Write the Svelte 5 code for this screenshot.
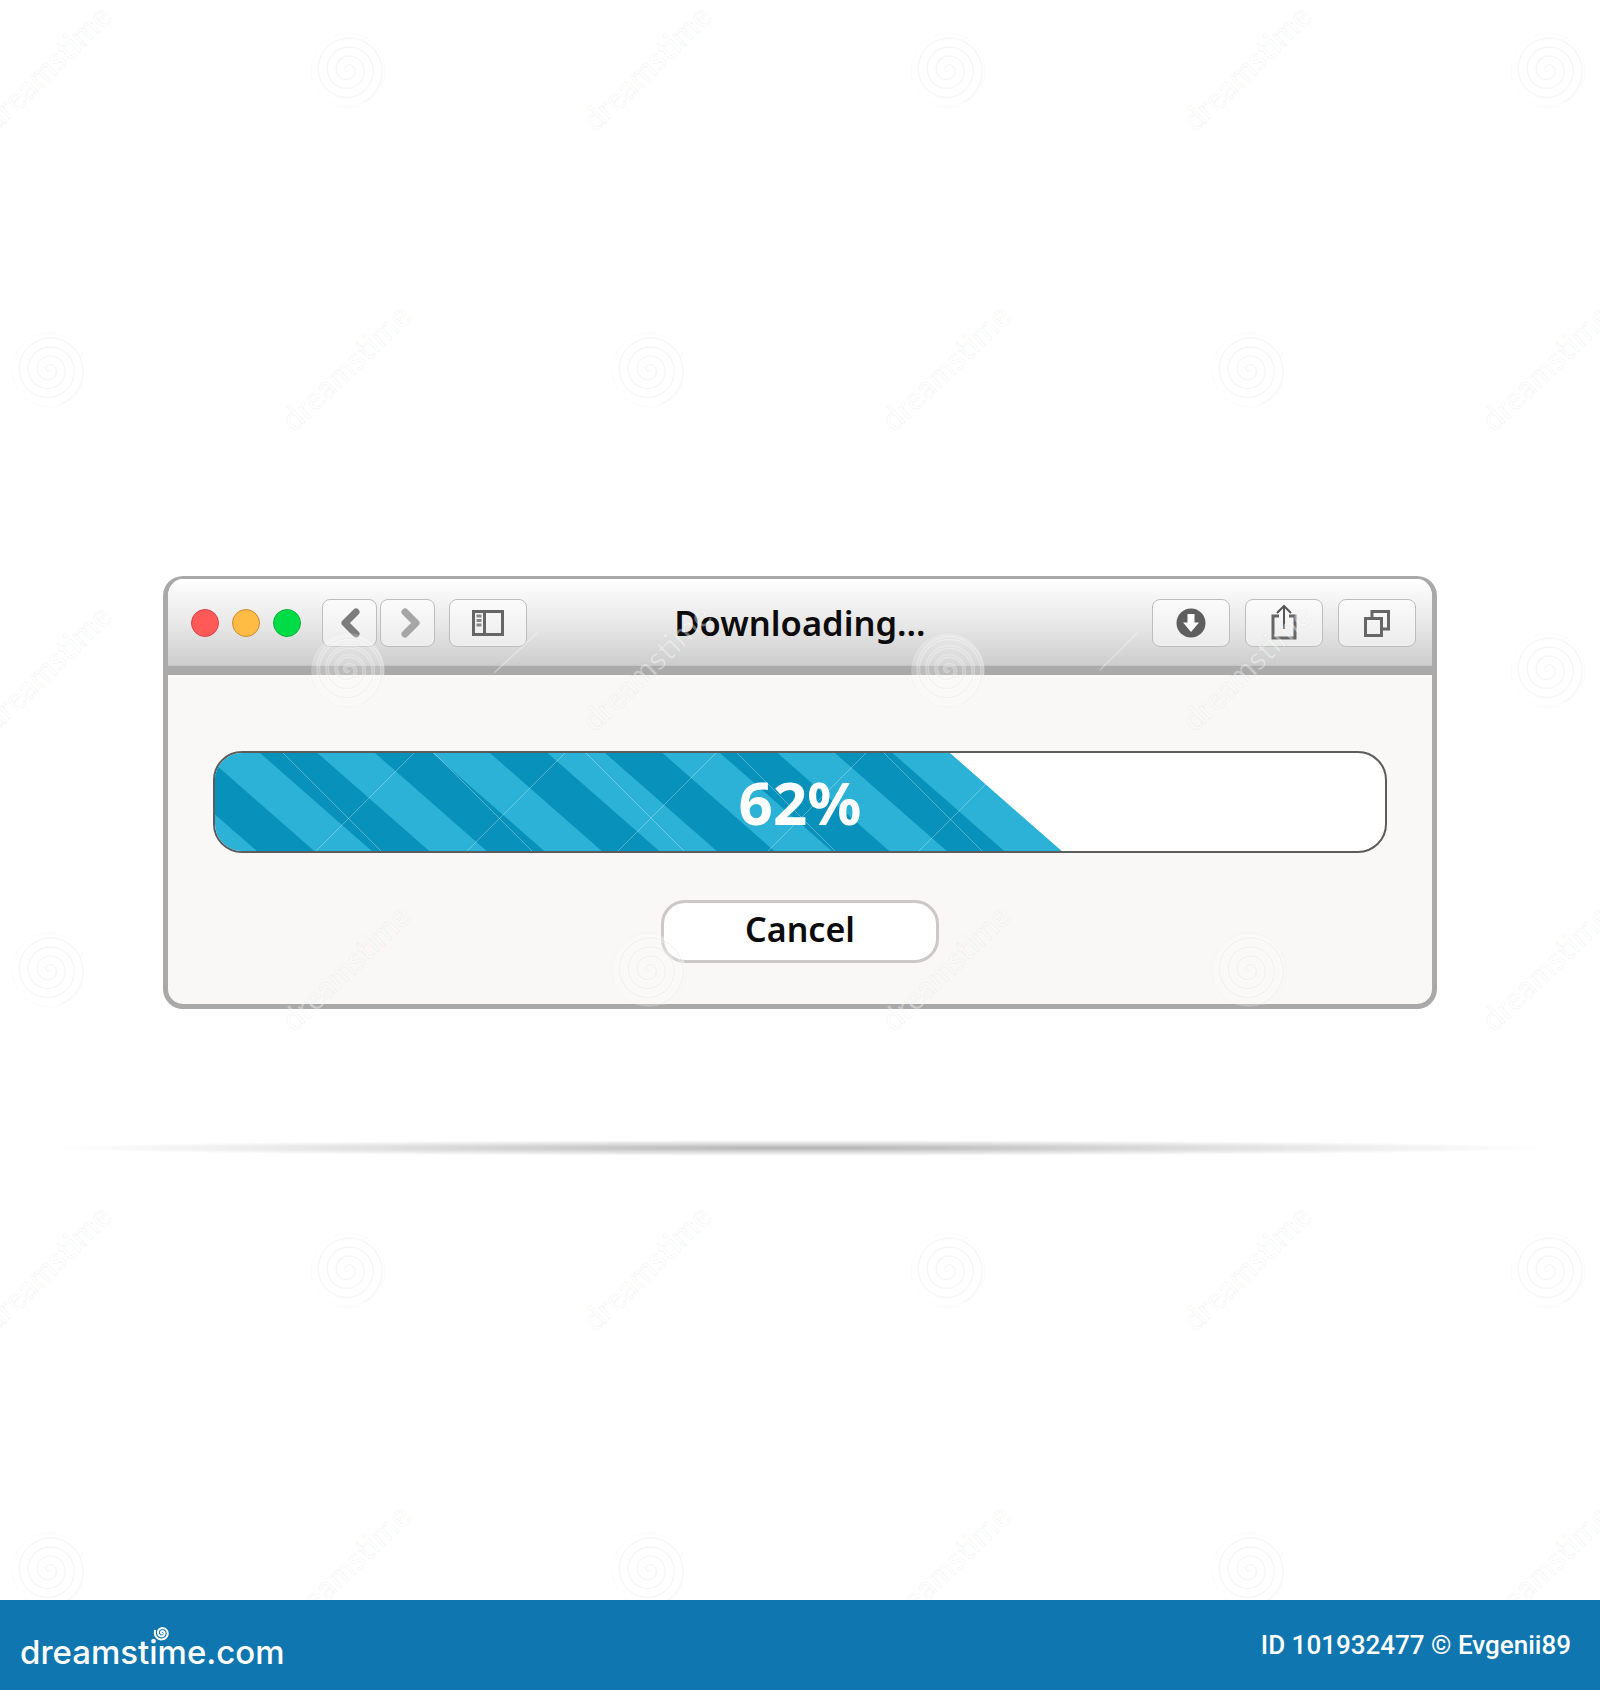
<script lang="ts">
  // fill geometry, in track coordinates (track starts at x 214, y 753)
  const trackH = 98;
  const period = 115;
  const slant = trackH * 1.14;
  const fillTop = 949 - 214;

  const stripes: string[] = [];
  for (let x = 259 - 214 - period * 2; x < fillTop; x += period) {
    const a = x;
    const b = Math.min(x + period / 2, fillTop);
    stripes.push(`${a},0 ${b},0 ${b + slant},${trackH} ${a + slant},${trackH}`);
  }

  // faint lattice lines from the watermark, x at the bottom / top of the bar
  const rising = [315, 466, 617, 767, 918].map((x) => x - 214);
  const falling = [282, 433, 585, 736, 883].map((x) => x - 214);

  // watermark grid
  const rows = [70, 370, 670, 970, 1270, 1570];
  const spirals: { x: number; y: number }[] = [];
  const marks: { x: number; y: number }[] = [];
  rows.forEach((y, r) => {
    [0, 1, 2].forEach((c) => {
      const a = 49 + c * 600;
      const b = 348 + c * 600;
      spirals.push({ x: r % 2 ? a : b, y });
      marks.push({ x: r % 2 ? b : a, y });
    });
  });

  function spiralPath(r: number, turns: number) {
    let d = '';
    const steps = turns * 24;
    for (let i = 0; i <= steps; i++) {
      const t = i / steps;
      const ang = t * turns * Math.PI * 2 + 1.2;
      const rad = r * t;
      d += `${i ? 'L' : 'M'}${(Math.cos(ang) * rad).toFixed(1)} ${(Math.sin(ang) * rad).toFixed(1)}`;
    }
    return d;
  }
  const spiral = spiralPath(36, 4);
  const logoSpiral = spiralPath(7.5, 2.4);
</script>

<div class="page">
  <main class="stage">
    <section class="window">
      <header class="titlebar">
        <div class="group left">
          <div class="lights">
            <span class="light red"></span>
            <span class="light amber"></span>
            <span class="light green"></span>
          </div>
          <div class="nav">
            <button class="tool narrow" aria-label="Back">
              <svg width="26" height="30" viewBox="0 0 26 30">
                <path d="M19 4 L8 15 L19 26" fill="none" stroke="#7c7c7c" stroke-width="7" stroke-linecap="round" stroke-linejoin="round" />
              </svg>
            </button>
            <button class="tool narrow" aria-label="Forward">
              <svg width="26" height="30" viewBox="0 0 26 30">
                <path d="M10 4 L21 15 L10 26" fill="none" stroke="#a6a6a6" stroke-width="7" stroke-linecap="round" stroke-linejoin="round" />
              </svg>
            </button>
          </div>
          <button class="tool" aria-label="Sidebar">
            <svg width="32" height="26" viewBox="0 0 32 26">
              <rect x="1.5" y="1.5" width="29" height="23" fill="none" stroke="#666" stroke-width="3" />
              <path d="M12.5 1.5V24.5" stroke="#666" stroke-width="3" />
              <path d="M4.500 6h5M4.500 10.500h5M4.500 15h5" stroke="#888" stroke-width="3" />
            </svg>
          </button>
        </div>

        <h1>Downloading...</h1>

        <div class="group right">
          <button class="tool" aria-label="Downloads">
            <svg width="30" height="30" viewBox="0 0 30 30">
              <circle cx="15" cy="15" r="14.500" fill="#5f5f5f" />
              <path d="M11.500 6h7v8.500h4.500L15 24 7 14.500h4.500z" fill="#fff" />
            </svg>
          </button>
          <button class="tool" aria-label="Share">
            <svg width="28" height="38" viewBox="0 0 28 38">
              <path d="M9 12H3V34H25V12H19" fill="none" stroke="#666" stroke-width="3" />
              <path d="M14 25V2M7 9 L14 2 L21 9" fill="none" stroke="#555" stroke-width="2" />
            </svg>
          </button>
          <button class="tool" aria-label="Tabs">
            <svg width="26" height="27" viewBox="0 0 26 27">
              <rect x="1.500" y="8.500" width="16" height="17" fill="none" stroke="#666" stroke-width="3" />
              <path d="M8 7V1.500H24.500V19H19" fill="none" stroke="#666" stroke-width="3" />
            </svg>
          </button>
        </div>
      </header>

      <div class="content">
        <div class="track">
          <svg class="fill" width="1170" height={trackH} viewBox="0 0 1170 {trackH}">
            <polygon points="0,0 {fillTop},0 {fillTop + slant},{trackH} 0,{trackH}" fill="#2bb2d6" />
            {#each stripes as points}
              <polygon {points} fill="#0891ba" />
            {/each}
            {#each rising as x}
              <line x1={x} y1={trackH} x2={x + trackH} y2="0" class="lattice" />
            {/each}
            {#each falling as x}
              <line x1={x} y1="0" x2={x + trackH} y2={trackH} class="lattice" />
            {/each}
          </svg>
          <span class="percent">62%</span>
        </div>
        <button class="cancel">Cancel</button>
      </div>
    </section>

    <div class="shadow"></div>

    <svg class="watermark" width="1600" height="1600" viewBox="0 0 1600 1600" aria-hidden="true">
      <line x1="494" y1="673" x2="537" y2="633" class="streak" />
      <line x1="1100" y1="670" x2="1137" y2="633" class="streak" />
      {#each spirals as s}
        <g transform="translate({s.x} {s.y})">
          <circle r="37" class="ring" />
          <path d={spiral} class="spiral-light" />
          <path d={spiral} class="spiral-dark" />
        </g>
      {/each}
      {#each marks as m}
        <text x={m.x} y={m.y} transform="rotate(-44 {m.x} {m.y})" text-anchor="middle" dominant-baseline="middle" class="mark">dreamstime</text>
      {/each}
    </svg>
  </main>

  <footer class="footer">
    <div class="logo">
      <span>dreamstime.com</span>
      <svg class="logo-spiral" width="18" height="18" viewBox="-9 -9 18 18">
        <circle r="9" fill="#0f76b0" />
        <path d={logoSpiral} fill="none" stroke="#fff" stroke-width="2" />
      </svg>
    </div>
    <div class="credit">ID 101932477 © Evgenii89</div>
  </footer>
</div>

<style>
  :global(body) {
    margin: 0;
    background: #fff;
  }

  .page {
    height: 1690px;
    display: flex;
    flex-direction: column;
    font-family: "Noto Sans", sans-serif;
    overflow: hidden;
  }

  .stage {
    position: relative;
    flex: 1;
    padding-top: 576px;
    display: flex;
    flex-direction: column;
    align-items: center;
  }

  .window {
    width: 1274px;
    height: 433px;
    box-sizing: border-box;
    border: 5px solid #a9a9a9;
    border-top-width: 3px;
    border-radius: 20px;
    overflow: hidden;
    display: flex;
    flex-direction: column;
    background: #f9f8f7;
  }

  .titlebar {
    height: 96px;
    box-sizing: border-box;
    padding: 20px 16px 0;
    display: grid;
    grid-template-columns: 1fr auto 1fr;
    align-items: start;
    background: linear-gradient(180deg, #ffffff 0%, #e6e6e6 50%, #cdcdcd 90%, #cdcdcd 90%, #ababab 90.500%, #a9a9a9 100%);
  }

  .group {
    display: flex;
    align-items: center;
  }

  .group.right {
    justify-content: flex-end;
    gap: 15px;
  }

  .lights {
    display: flex;
    gap: 13px;
    margin: 0 21px 0 7px;
  }

  .light {
    width: 28px;
    height: 28px;
    box-sizing: border-box;
    border-radius: 50%;
    border: 1px solid;
  }

  .red { background: #ff5a58; border-color: #d9424a; }
  .amber { background: #ffbc45; border-color: #c98c2f; }
  .green { background: #00dc46; border-color: #0fae3c; }

  .nav {
    display: flex;
    gap: 3px;
    margin-right: 14px;
  }

  .tool {
    width: 78px;
    height: 48px;
    padding: 0;
    box-sizing: border-box;
    display: flex;
    align-items: center;
    justify-content: center;
    border: 1px solid #bdbdbd;
    border-radius: 8px;
    background: linear-gradient(180deg, #fbfbfb, #ececec);
  }

  .tool.narrow {
    width: 55px;
  }

  h1 {
    margin: 0;
    height: 48px;
    line-height: 48px;
    font-size: 34.500px;
    font-weight: 600;
    color: #0c0c0c;
    white-space: nowrap;
  }

  .content {
    flex: 1;
    padding-top: 76px;
    display: flex;
    flex-direction: column;
    align-items: center;
  }

  .track {
    position: relative;
    width: 1174px;
    height: 102px;
    box-sizing: border-box;
    border: 2px solid #5c5c5c;
    border-radius: 29px;
    background: #fff;
    overflow: hidden;
    flex-shrink: 0;
  }

  .fill {
    display: block;
  }

  .lattice {
    stroke: #fff;
    stroke-opacity: 0.3;
    stroke-width: 1;
  }

  .percent {
    position: absolute;
    inset: 0;
    display: flex;
    align-items: center;
    justify-content: center;
    color: #fff;
    font-size: 60px;
    font-weight: 700;
    line-height: 1;
  }

  .cancel {
    margin-top: 47px;
    width: 278px;
    height: 63px;
    padding: 0 0 6px;
    box-sizing: border-box;
    border: 3px solid #cbc8c5;
    border-radius: 24px;
    background: #fff;
    color: #0c0c0c;
    font-family: inherit;
    font-size: 34px;
    font-weight: 600;
    line-height: 1;
  }

  .shadow {
    width: 1500px;
    height: 16px;
    margin-top: 131px;
    background: radial-gradient(ellipse closest-side, rgba(0, 0, 0, 0.3) 0%, rgba(0, 0, 0, 0.14) 50%, rgba(0, 0, 0, 0) 100%);
  }

  .watermark {
    position: absolute;
    top: 0;
    left: 0;
    pointer-events: none;
  }

  .ring {
    fill: rgba(255, 255, 255, 0.22);
    stroke: rgba(0, 0, 0, 0.02);
    stroke-width: 1;
  }

  .spiral-light {
    fill: none;
    stroke: rgba(255, 255, 255, 0.3);
    stroke-width: 4;
  }

  .spiral-dark {
    fill: none;
    stroke: rgba(0, 0, 0, 0.035);
    stroke-width: 1.500;
  }

  .streak {
    stroke: rgba(255, 255, 255, 0.35);
    stroke-width: 1.500;
  }

  .mark {
    font-family: Lato, sans-serif;
    font-size: 32px;
    font-weight: 400;
    fill: rgba(255, 255, 255, 0.4);
    stroke: rgba(0, 0, 0, 0.05);
    stroke-width: 1;
  }

  .footer {
    height: 90px;
    flex-shrink: 0;
    padding: 0 29px 0 20px;
    display: flex;
    align-items: center;
    justify-content: space-between;
    background: #0f76b0;
    color: #fff;
  }

  .logo {
    position: relative;
    font-family: Inter, sans-serif;
    font-size: 33px;
    font-weight: 500;
    line-height: 1;
    margin-top: 14px;
  }

  .logo-spiral {
    position: absolute;
    left: 133px;
    top: -12px;
  }

  .credit {
    font-family: Roboto, sans-serif;
    font-size: 26px;
    font-weight: 500;
  }
</style>
